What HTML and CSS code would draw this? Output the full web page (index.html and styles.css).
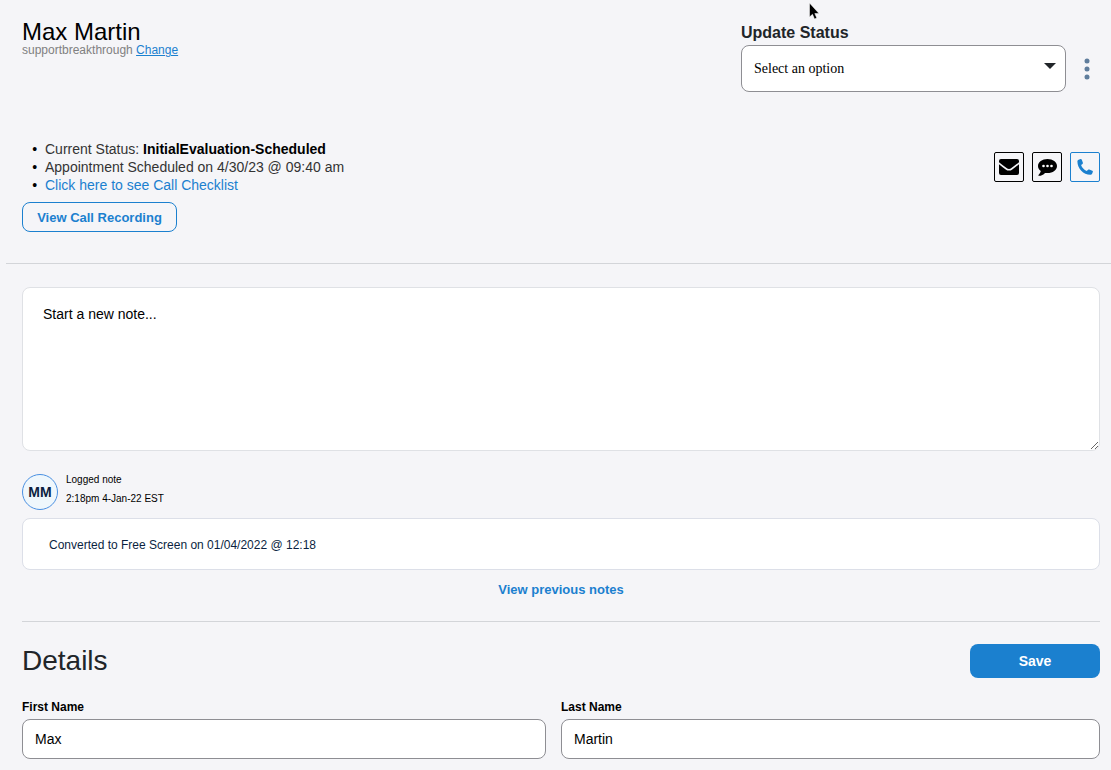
FILE: index.html
```html
<!DOCTYPE html>
<html lang="en">

<head>
    <meta charset="UTF-8">
    <meta name="viewport" content="width=device-width, initial-scale=1.0">
    <title>Max Martin</title>
    <link rel="stylesheet" href="styles.css">
</head>

<body>
    <main>
        <section class="summary">
            <header class="top">
                <div>
                    <h1>Max Martin</h1>
                    <p class="account">supportbreakthrough <a href="#">Change</a></p>
                </div>
                <div class="update">
                    <div class="status">
                        <label for="status">Update Status</label>
                        <div class="select">
                            <select id="status">
                                <option>Select an option</option>
                            </select>
                            <svg class="arrow" viewBox="0 0 12 6" width="12" height="6"><path d="M0 0h12L6 6z" /></svg>
                        </div>
                    </div>
                    <button class="more" type="button" aria-label="More">
                        <svg viewBox="0 0 6 22" width="6" height="22" fill="#5f7d9c">
                            <circle cx="3" cy="3" r="2.5" />
                            <circle cx="3" cy="11" r="2.5" />
                            <circle cx="3" cy="19" r="2.5" />
                        </svg>
                    </button>
                </div>
            </header>
            <div class="info">
                <div>
                    <ul>
                        <li><span>Current Status: <strong>InitialEvaluation-Scheduled</strong></span></li>
                        <li><span>Appointment Scheduled on 4/30/23 @ 09:40 am</span></li>
                        <li><a href="#">Click here to see Call Checklist</a></li>
                    </ul>
                    <button class="recording" type="button">View Call Recording</button>
                </div>
                <div class="contact">
                    <button type="button" aria-label="Email">
                        <svg viewBox="0 0 20 16" width="20" height="16">
                            <path d="M2 0h16a2 2 0 0 1 2 2v1.200c-2.600 2.200-5 4-7.600 5.900-1.500 1.200-3.300 1.200-4.800 0C5 7.200 2.600 5.400 0 3.200V2a2 2 0 0 1 2-2z" />
                            <path d="M0 5.200c2.300 1.900 4.400 3.500 6.700 5.200 2 1.600 4.600 1.600 6.600 0 2.300-1.700 4.400-3.300 6.700-5.200V14a2 2 0 0 1-2 2H2a2 2 0 0 1-2-2z" />
                        </svg>
                    </button>
                    <button type="button" aria-label="Text message">
                        <svg viewBox="0 0 20 18" width="20" height="18">
                            <path d="M10.500 1C5.200 1 1 4 1 8c0 2 1 3.700 2.800 5-.3 1.300-1 2.600-2.300 3.900-.3.400-.1.900.4.900 2.500-.1 4.600-1.100 6.100-2.900.8.100 1.600.2 2.500.2C15.800 15.100 20 12 20 8s-4.200-7-9.500-7z" />
                            <g fill="#fff">
                                <circle cx="6.500" cy="8" r="1.300" />
                                <circle cx="10.500" cy="8" r="1.300" />
                                <circle cx="14.500" cy="8" r="1.300" />
                            </g>
                        </svg>
                    </button>
                    <button class="call" type="button" aria-label="Call">
                        <svg viewBox="0 0 16 16" width="16" height="16">
                            <path d="M1.600.8L3.600.1c.5-.2 1 .1 1.200.6l1.100 3.100c.1.400 0 .9-.4 1.100L4.100 5.900c.9 2.600 3 4.900 5.600 6.200l1.400-1.300c.3-.3.800-.4 1.200-.2l3 1.200c.5.200.7.700.5 1.200l-.7 1.800c-.3.700-.8 1-1.600 1C6.500 15.900.4 9.600.4 2.500c0-.9.400-1.400 1.200-1.700z" />
                        </svg>
                    </button>
                </div>
            </div>
        </section>

        <section class="notes">
            <textarea class="new-note" aria-label="New note" placeholder="Start a new note..."></textarea>
            <div class="author">
                <div class="avatar">MM</div>
                <div class="logged">
                    <p>Logged note</p>
                    <p>2:18pm 4-Jan-22 EST</p>
                </div>
            </div>
            <p class="note">Converted to Free Screen on 01/04/2022 @ 12:18</p>
            <a class="previous" href="#">View previous notes</a>
        </section>

        <form class="details">
            <div class="details-head">
                <h2>Details</h2>
                <button class="save" type="button">Save</button>
            </div>
            <div class="fields">
                <div>
                    <label for="first">First Name</label>
                    <input type="text" id="first" value="Max">
                </div>
                <div>
                    <label for="last">Last Name</label>
                    <input type="text" id="last" value="Martin">
                </div>
            </div>
        </form>
    </main>

    <svg class="pointer" viewBox="0 0 12 18" width="12" height="18">
        <path d="M1.500 1v14l3-2.700 2 4.700 2.300-1-2-4.500h4.200z" fill="#000" stroke="#fff" stroke-width=".5" />
    </svg>
</body>

</html>
```
FILE: styles.css
```css
* {
    box-sizing: border-box;
    padding: 0;
    margin: 0;
}

body {
    background: #f5f5f8;
    color: #000;
    font-family: "Liberation Sans", Arial, sans-serif;
    font-size: 14px;
    line-height: 18px;
}

main {
    padding-left: 6px;
}

a {
    color: #1b80cf;
    text-decoration: none;
}

button,
input,
textarea {
    font-family: inherit;
    font-size: 14px;
}

button {
    cursor: pointer;
}

/* name, status and contact buttons */
.summary {
    padding: 20px 11px 31px 16px;
    border-bottom: 1px solid #d3d5d9;
}

.top {
    display: flex;
    justify-content: space-between;
    height: 120px;
}

h1 {
    font-size: 24px;
    font-weight: normal;
    line-height: 24px;
}

.account {
    color: #808080;
    font-size: 12px;
    line-height: 12px;
}

.account a {
    text-decoration: underline;
}

.update {
    display: flex;
    align-items: flex-end;
    align-self: flex-start;
    gap: 8px;
    padding-top: 4px;
}

.status label {
    display: block;
    color: #212529;
    font-size: 16px;
    font-weight: bold;
    line-height: 18px;
    margin-bottom: 3px;
}

.select {
    position: relative;
}

.select select {
    display: block;
    appearance: none;
    width: 325px;
    height: 47px;
    padding: 0 12px;
    border: 1px solid #8e8e93;
    border-radius: 8px;
    background: #fff;
    color: #000;
    font-family: "Liberation Serif", "Times New Roman", serif;
    font-size: 14px;
}

.arrow {
    position: absolute;
    top: 18px;
    right: 10px;
    fill: #212529;
    pointer-events: none;
}

.more {
    display: flex;
    align-items: center;
    justify-content: center;
    width: 26px;
    height: 47px;
    border: 0;
    background: none;
}

.info {
    display: flex;
    justify-content: space-between;
    align-items: flex-start;
}

ul {
    padding-left: 23px;
    margin-bottom: 8px;
}

li::marker {
    content: "•  ";
}

li span {
    color: #333;
}

strong {
    color: #000;
}

.recording {
    height: 30px;
    width: 155px;
    border: 1px solid #1b80cf;
    border-radius: 8px;
    background: none;
    color: #1b80cf;
    font-size: 13px;
    font-weight: bold;
}

.contact {
    display: flex;
    gap: 8px;
    padding-top: 12px;
}

.contact button {
    display: flex;
    align-items: center;
    justify-content: center;
    width: 30px;
    height: 30px;
    border: 1px solid #000;
    border-radius: 2px;
    background: none;
}

.contact .call {
    border-color: #1b80cf;
    fill: #1b80cf;
}

/* notes */
.notes {
    padding: 23px 0 22px;
    margin: 0 11px 0 16px;
    border-bottom: 1px solid #d3d5d9;
}

.new-note {
    display: block;
    width: 100%;
    height: 164px;
    padding: 18px 20px;
    border: 1px solid #dfe1e5;
    border-radius: 8px;
    background: #fff;
    resize: vertical;
}

.new-note::placeholder {
    color: #000;
}

.author {
    display: flex;
    gap: 8px;
    padding: 23px 0 8px;
}

.avatar {
    width: 36px;
    height: 36px;
    border: 1px solid #4a90e2;
    border-radius: 50%;
    background: #eff7fc;
    color: #0b1f3f;
    font-weight: bold;
    line-height: 34px;
    text-align: center;
}

.logged {
    font-size: 10px;
    line-height: 19px;
    margin-top: -4px;
}

.note {
    padding: 17px 26px 15px;
    border: 1px solid #dcdfe8;
    border-radius: 8px;
    background: #fff;
    color: #0b1f3f;
    font-size: 12px;
    line-height: 18px;
    margin-bottom: 11px;
}

.previous {
    display: block;
    font-size: 13px;
    font-weight: bold;
    text-align: center;
}

/* details form */
.details {
    padding: 22px 11px 11px 16px;
}

.details-head {
    display: flex;
    justify-content: space-between;
    align-items: center;
    margin-bottom: 20px;
}

h2 {
    color: #212529;
    font-size: 28px;
    font-weight: normal;
    line-height: 34px;
}

.save {
    width: 130px;
    height: 34px;
    border: 0;
    border-radius: 8px;
    background: #1b80cf;
    color: #fff;
    font-weight: bold;
}

.fields {
    display: grid;
    grid-template-columns: calc(50% - 15px) 1fr;
    gap: 15px;
}

.fields label {
    display: block;
    font-size: 12px;
    font-weight: bold;
    margin-bottom: 3px;
}

.fields input {
    display: block;
    width: 100%;
    height: 40px;
    padding: 0 12px;
    border: 1px solid #8e8e93;
    border-radius: 8px;
    background: #fff;
}

.pointer {
    position: absolute;
    top: 2px;
    left: 808px;
}
```
